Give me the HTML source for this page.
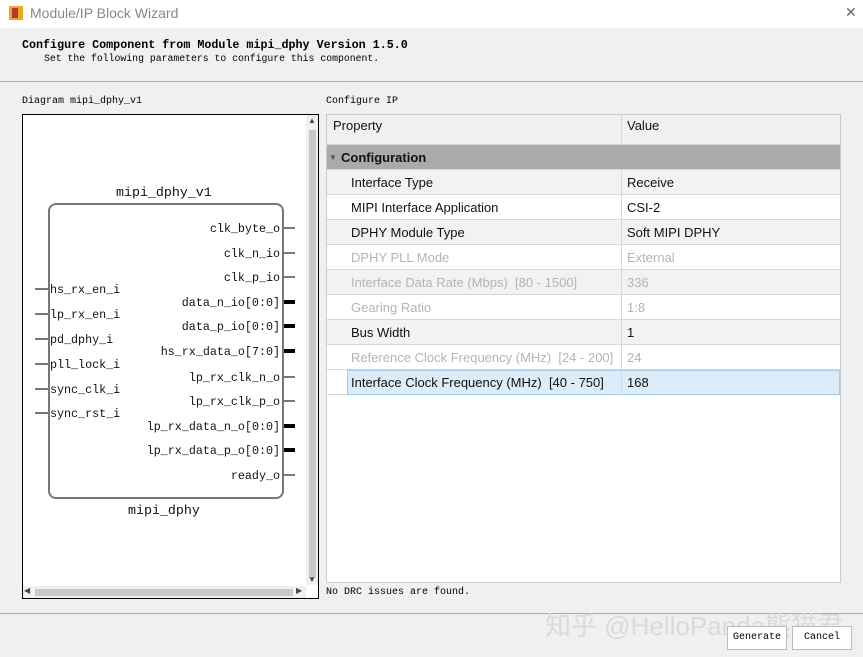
<!DOCTYPE html>
<html><head><style>
*{margin:0;padding:0;box-sizing:border-box}
body{width:863px;height:657px;background:#f0f0f0;position:relative;overflow:hidden;font-family:"Liberation Sans",sans-serif}
.a{position:absolute}
.mono{font-family:"Liberation Mono","Noto Serif CJK SC",monospace}
.pin{position:absolute;font-family:"Liberation Mono",monospace;font-size:11.7px;color:#111;white-space:nowrap;line-height:14px}
.row{position:absolute;left:327px;width:513px;height:25px;border-bottom:1px solid #d8d8d8;font-size:13px;line-height:25px;color:#111}
.row .p{position:absolute;left:24px}
.row .v{position:absolute;left:294px;border-left:1px solid #d8d8d8;padding-left:5px;height:25px}
.dis{color:#b4b4b4}
.g{background:#f2f2f2}.w{background:#fff}
</style></head><body>
<div class="a" style="left:0;top:0;width:863px;height:28px;background:#fff"></div>
<div class="a" style="left:9px;top:6px;width:14px;height:14px;background:#e8a820"></div>
<div class="a" style="left:12px;top:8px;width:6px;height:10px;background:#b33"></div>
<div class="a" style="left:30px;top:5px;font-size:14px;color:#888">Module/IP Block Wizard</div>
<div class="a" style="left:845px;top:4px;font-size:14px;color:#666">✕</div>
<div class="a mono" style="left:22px;top:38px;font-size:11.7px;font-weight:bold;color:#000">Configure Component from Module mipi_dphy Version 1.5.0</div>
<div class="a mono" style="left:44px;top:53px;font-size:9.8px;color:#000">Set the following parameters to configure this component.</div>
<div class="a" style="left:0;top:81px;width:863px;height:1px;background:#aaa"></div>
<div class="a mono" style="left:22px;top:96px;font-size:10px;color:#000">Diagram mipi_dphy_v1</div>
<div class="a mono" style="left:326px;top:96px;font-size:10px;color:#000">Configure IP</div>
<div class="a" style="left:22px;top:114px;width:297px;height:485px;background:#fff;border:1px solid #000"></div>
<div class="a" style="left:306px;top:115px;width:12px;height:470px;background:#f0f0f0"></div>
<div class="a" style="left:309px;top:130px;width:7px;height:448px;background:#c8c8c8"></div>
<div class="a" style="left:308px;top:116px;font-size:8px;color:#444">▲</div>
<div class="a" style="left:308px;top:575px;font-size:8px;color:#444">▼</div>
<div class="a" style="left:23px;top:586px;width:283px;height:12px;background:#f0f0f0"></div>
<div class="a" style="left:35px;top:589px;width:258px;height:7px;background:#c8c8c8"></div>
<div class="a" style="left:24px;top:586px;font-size:8px;color:#444">◀</div>
<div class="a" style="left:296px;top:586px;font-size:8px;color:#444">▶</div>
<div class="pin" style="left:116px;top:186px;font-size:13.3px">mipi_dphy_v1</div>
<div class="pin" style="left:128px;top:504px;font-size:13.3px">mipi_dphy</div>
<div class="a" style="left:48px;top:203px;width:236px;height:296px;border:2px solid #777;border-radius:8px;background:#fff"></div>
<svg class="a" style="left:0;top:0" width="330" height="520">
<g stroke="#777" stroke-width="2">
<line x1="35" y1="289" x2="48" y2="289"/><line x1="35" y1="314" x2="48" y2="314"/><line x1="35" y1="339" x2="48" y2="339"/><line x1="35" y1="364" x2="48" y2="364"/><line x1="35" y1="389" x2="48" y2="389"/><line x1="35" y1="413" x2="48" y2="413"/>
<line x1="284" y1="228" x2="295" y2="228"/><line x1="284" y1="253" x2="295" y2="253"/><line x1="284" y1="277" x2="295" y2="277"/><line x1="284" y1="377" x2="295" y2="377"/><line x1="284" y1="401" x2="295" y2="401"/><line x1="284" y1="475" x2="295" y2="475"/>
</g>
<g stroke="#000" stroke-width="4">
<line x1="284" y1="302" x2="295" y2="302"/><line x1="284" y1="326" x2="295" y2="326"/><line x1="284" y1="351" x2="295" y2="351"/><line x1="284" y1="426" x2="295" y2="426"/><line x1="284" y1="450" x2="295" y2="450"/>
</g></svg>
<div class="pin" style="left:50px;top:283px">hs_rx_en_i</div>
<div class="pin" style="left:50px;top:308px">lp_rx_en_i</div>
<div class="pin" style="left:50px;top:333px">pd_dphy_i</div>
<div class="pin" style="left:50px;top:358px">pll_lock_i</div>
<div class="pin" style="left:50px;top:383px">sync_clk_i</div>
<div class="pin" style="left:50px;top:407px">sync_rst_i</div>
<div class="pin" style="right:583px;top:222px">clk_byte_o</div>
<div class="pin" style="right:583px;top:247px">clk_n_io</div>
<div class="pin" style="right:583px;top:271px">clk_p_io</div>
<div class="pin" style="right:583px;top:296px">data_n_io[0:0]</div>
<div class="pin" style="right:583px;top:320px">data_p_io[0:0]</div>
<div class="pin" style="right:583px;top:345px">hs_rx_data_o[7:0]</div>
<div class="pin" style="right:583px;top:371px">lp_rx_clk_n_o</div>
<div class="pin" style="right:583px;top:395px">lp_rx_clk_p_o</div>
<div class="pin" style="right:583px;top:420px">lp_rx_data_n_o[0:0]</div>
<div class="pin" style="right:583px;top:444px">lp_rx_data_p_o[0:0]</div>
<div class="pin" style="right:583px;top:469px">ready_o</div>
<div class="a" style="left:326px;top:114px;width:515px;height:469px;background:#fff;border:1px solid #ccc"></div>
<div class="row" style="top:115px;height:30px;background:#f0f0f0;line-height:22px"><span style="position:absolute;left:6px">Property</span><span class="v" style="height:30px">Value</span></div>
<div class="row" style="top:145px;background:#aaa;font-weight:bold"><span style="position:absolute;left:2px;font-size:8px;color:#555">▼</span><span style="position:absolute;left:14px">Configuration</span></div>
<div class="row g" style="top:170px"><span class="p">Interface Type</span><span class="v">Receive</span></div>
<div class="row w" style="top:195px"><span class="p">MIPI Interface Application</span><span class="v">CSI-2</span></div>
<div class="row g" style="top:220px"><span class="p">DPHY Module Type</span><span class="v">Soft MIPI DPHY</span></div>
<div class="row w dis" style="top:245px"><span class="p">DPHY PLL Mode</span><span class="v">External</span></div>
<div class="row g dis" style="top:270px"><span class="p">Interface Data Rate (Mbps)&nbsp; [80 - 1500]</span><span class="v">336</span></div>
<div class="row w dis" style="top:295px"><span class="p">Gearing Ratio</span><span class="v">1:8</span></div>
<div class="row g" style="top:320px"><span class="p">Bus Width</span><span class="v">1</span></div>
<div class="row w dis" style="top:345px"><span class="p">Reference Clock Frequency (MHz)&nbsp; [24 - 200]</span><span class="v">24</span></div>
<div class="row w" style="top:370px"><div class="a" style="left:20px;top:0;width:493px;height:25px;background:#dcecf8;border:1px solid #a8cce8"></div><span class="p">Interface Clock Frequency (MHz)&nbsp; [40 - 750]</span><span class="v">168</span></div>
<div class="a mono" style="left:326px;top:587px;font-size:10px;color:#000">No DRC issues are found.</div>
<div class="a" style="left:0;top:613px;width:863px;height:1px;background:#aaa"></div>
<div class="a" style="left:545px;top:606px;font-size:26px;color:#dadada;font-family:'Liberation Sans','Noto Sans CJK SC',sans-serif">知乎 @HelloPanda熊猫君</div>
<div class="a mono" style="left:727px;top:626px;width:60px;height:24px;border:1px solid #bbb;background:#fff;font-size:10px;text-align:center;line-height:22px">Generate</div>
<div class="a mono" style="left:792px;top:626px;width:60px;height:24px;border:1px solid #bbb;background:#fff;font-size:10px;text-align:center;line-height:22px">Cancel</div>
</body></html>
